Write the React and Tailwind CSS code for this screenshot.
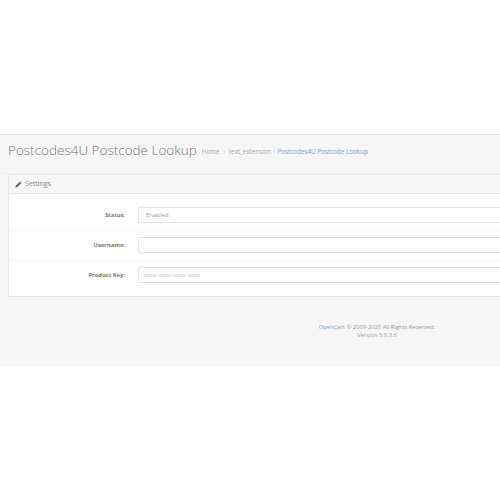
import React from "react";

const rows = [
  { label: "Status:", value: "Enabled", rowClass: "h-[37px] pt-[13px]" },
  { label: "Username:", value: "", rowClass: "h-[30px] pt-[6px]" },
  { label: "Product Key:", placeholder: "xxxx-xxxx-xxxx-xxxx", rowClass: "h-[35px] pt-[6px]" },
];

function PencilIcon() {
  return (
    <svg viewBox="0 0 12 12" className="w-[7px] h-[7px] shrink-0" fill="#666">
      <path d="M8.6 0.8 L11.2 3.4 L4.2 10.4 L0.6 11.4 L1.6 7.8 Z" />
    </svg>
  );
}

export default function App() {
  return (
    <div className="w-[500px] h-[500px] overflow-hidden bg-white font-['Open_Sans',sans-serif]">
      <div className="h-[134px]" />
      <div className="h-[232px] bg-[#f6f6f6] border-t border-[#e2e2e2]">
        <div className="h-[39px] flex items-center pl-2 pb-[7px] whitespace-nowrap border-b border-[#f1f1f1]">
          <h1 className="text-[13.5px] font-light leading-none text-[#777]">Postcodes4U Postcode Lookup</h1>
          <div className="ml-[5px] pt-[3px] flex items-center text-[6.3px] text-[#aaa]">
            <span>Home</span>
            <span className="w-[9px] text-center text-[#c8c8c8]">›</span>
            <span>text_extension</span>
            <span className="w-[6px] text-center text-[#c8c8c8]">›</span>
            <span className="text-[#74a3c6]">Postcodes4U Postcode Lookup</span>
          </div>
        </div>
        <div className="ml-2 w-[520px] border border-[#e8e8e8] bg-white">
          <div className="h-[19px] flex items-center gap-[3px] pl-[6px] bg-[#f6f6f6] border-b border-[#e8e8e8] text-[7px] text-[#888]">
            <PencilIcon />
            <span>Settings</span>
          </div>
          {rows.map((r, i) => (
            <div
              key={r.label}
              className={`flex items-start ${r.rowClass} ${i < rows.length - 1 ? "border-b border-[#f5f5f5]" : ""}`}
            >
              <label className="w-[116px] shrink-0 h-[16px] flex items-center justify-end text-[5.8px] font-bold text-[#777]">
                {r.label}
              </label>
              <div className="ml-[13px] flex-1 h-[16px] flex items-center px-[7px] border border-[#e2e2e2] bg-white text-[6px] text-[#999]">
                {r.value}
                {r.placeholder && <span className="text-[#bbb] text-[6px] -ml-[2px]">{r.placeholder}</span>}
              </div>
            </div>
          ))}
        </div>
        <div className="mt-[26px] ml-[127px] w-[500px] text-center text-[5.8px] leading-[8px] text-[#999]">
          <div>
            <span className="text-[#74a3c6]">OpenCart</span> © 2009-2020 All Rights Reserved.
          </div>
          <div>Version 3.0.3.6</div>
        </div>
      </div>
    </div>
  );
}
